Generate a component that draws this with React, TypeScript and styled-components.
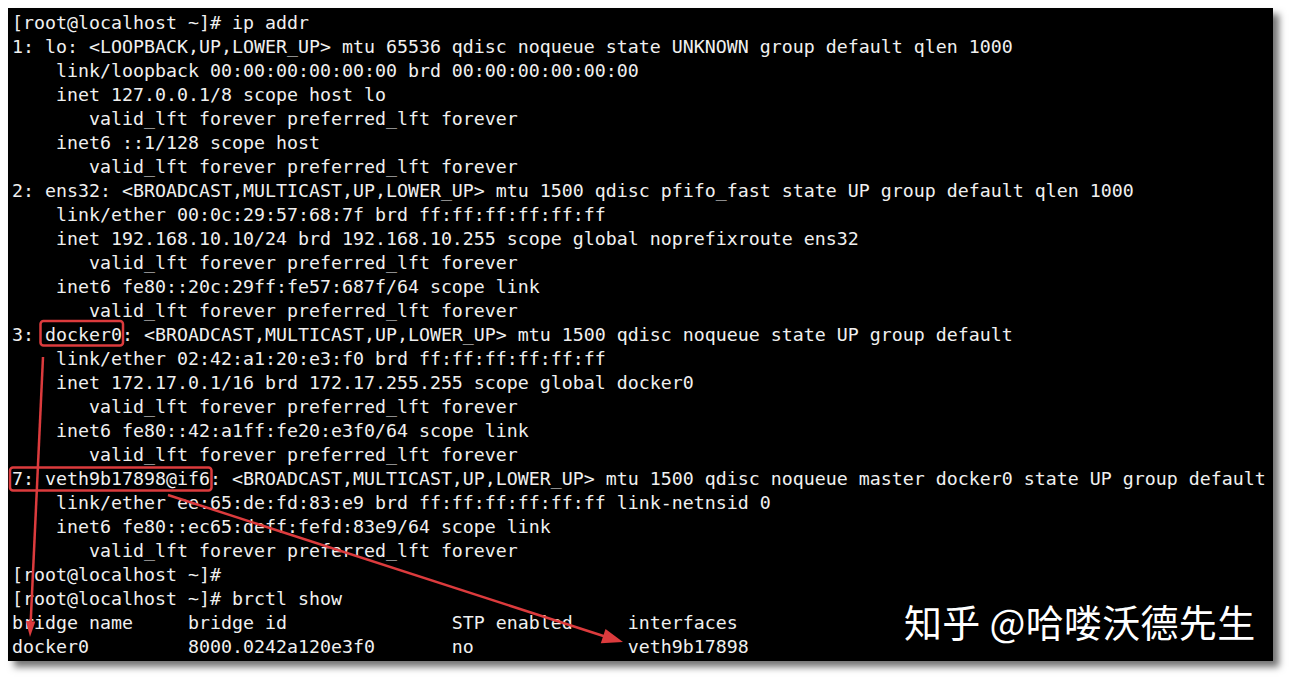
import React from "react";
import styled, { createGlobalStyle } from "styled-components";

const Global = createGlobalStyle`
  html, body { margin: 0; padding: 0; background: #ffffff; }
  body { width: 1289px; height: 677px; overflow: hidden; }
`;

const Page = styled.div`
  position: relative;
  width: 1289px;
  height: 677px;
  padding: 8px 0 0 8px;
  box-sizing: border-box;
  background: #ffffff;
`;

const Terminal = styled.div`
  position: relative;
  width: 1265px;
  height: 653px;
  background: #000000;
  box-shadow: 6px 6px 7px rgba(0, 0, 0, 0.55);
  padding: 3px 0 0 4px;
  box-sizing: border-box;
  overflow: hidden;
`;

const Output = styled.pre`
  margin: 0;
  font-family: "DejaVu Sans Mono", "Liberation Mono", monospace;
  font-size: 18.27px;
  line-height: 24px;
  color: #f0f0f0;
  white-space: pre;
`;

const Watermark = styled.div`
  position: absolute;
  left: 904px;
  top: 597px;
  font-family: "Noto Sans CJK SC", "Noto Sans", sans-serif;
  font-size: 38px;
  line-height: 48px;
  letter-spacing: 0.3px;
  color: #ffffff;
  white-space: pre;
`;

const Overlay = styled.svg`
  position: absolute;
  left: 0;
  top: 0;
  width: 1289px;
  height: 677px;
  pointer-events: none;
`;

const lines = [
  "[root@localhost ~]# ip addr",
  "1: lo: <LOOPBACK,UP,LOWER_UP> mtu 65536 qdisc noqueue state UNKNOWN group default qlen 1000",
  "    link/loopback 00:00:00:00:00:00 brd 00:00:00:00:00:00",
  "    inet 127.0.0.1/8 scope host lo",
  "       valid_lft forever preferred_lft forever",
  "    inet6 ::1/128 scope host",
  "       valid_lft forever preferred_lft forever",
  "2: ens32: <BROADCAST,MULTICAST,UP,LOWER_UP> mtu 1500 qdisc pfifo_fast state UP group default qlen 1000",
  "    link/ether 00:0c:29:57:68:7f brd ff:ff:ff:ff:ff:ff",
  "    inet 192.168.10.10/24 brd 192.168.10.255 scope global noprefixroute ens32",
  "       valid_lft forever preferred_lft forever",
  "    inet6 fe80::20c:29ff:fe57:687f/64 scope link",
  "       valid_lft forever preferred_lft forever",
  "3: docker0: <BROADCAST,MULTICAST,UP,LOWER_UP> mtu 1500 qdisc noqueue state UP group default",
  "    link/ether 02:42:a1:20:e3:f0 brd ff:ff:ff:ff:ff:ff",
  "    inet 172.17.0.1/16 brd 172.17.255.255 scope global docker0",
  "       valid_lft forever preferred_lft forever",
  "    inet6 fe80::42:a1ff:fe20:e3f0/64 scope link",
  "       valid_lft forever preferred_lft forever",
  "7: veth9b17898@if6: <BROADCAST,MULTICAST,UP,LOWER_UP> mtu 1500 qdisc noqueue master docker0 state UP group default",
  "    link/ether ee:65:de:fd:83:e9 brd ff:ff:ff:ff:ff:ff link-netnsid 0",
  "    inet6 fe80::ec65:deff:fefd:83e9/64 scope link",
  "       valid_lft forever preferred_lft forever",
  "[root@localhost ~]#",
  "[root@localhost ~]# brctl show",
  "bridge name     bridge id               STP enabled     interfaces",
  "docker0         8000.0242a120e3f0       no              veth9b17898",
];

const RED = "#dc3b3d";

export default function App() {
  return (
    <>
      <Global />
      <Page>
        <Terminal>
          <Output>{lines.join("\n")}</Output>
        </Terminal>
        <Watermark>知乎 @哈喽沃德先生</Watermark>
        <Overlay viewBox="0 0 1289 677">
          <rect x="40.5" y="321" width="82.5" height="24.5" rx="3" fill="none" stroke={RED} strokeWidth="2.5" />
          <rect x="10" y="467.5" width="201.5" height="23" rx="3" fill="none" stroke={RED} strokeWidth="2.5" />
          <line x1="43" y1="357" x2="30.6" y2="624" stroke={RED} strokeWidth="2.5" />
          <polygon points="30,637 35.3,621.5 25.9,621.1" fill={RED} />
          <line x1="168" y1="495" x2="605" y2="636.5" stroke={RED} strokeWidth="2.5" />
          <polygon points="623,642 605.5,629 600.8,643.3" fill={RED} />
        </Overlay>
      </Page>
    </>
  );
}
